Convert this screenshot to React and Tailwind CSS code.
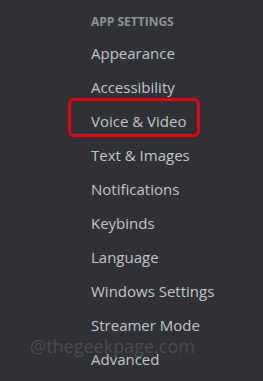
import React from "react";

const items = [
  "Appearance",
  "Accessibility",
  "Voice & Video",
  "Text & Images",
  "Notifications",
  "Keybinds",
  "Language",
  "Windows Settings",
  "Streamer Mode",
  "Advanced",
];

export default function App() {
  return (
    <div
      className="relative w-[263px] h-[381px] overflow-hidden bg-[#2f3136]"
      style={{ fontFamily: '"Open Sans", "Noto Sans", sans-serif' }}
    >
      <div className="pl-[91px] pt-[13px] flex flex-col">
        <div className="h-[18px] flex items-center text-[12px] font-bold text-[#8e9297]">
          APP SETTINGS
        </div>
        <div className="h-[5px]" />
        {items.map((label) => (
          <div
            key={label}
            className="relative h-[34px] flex items-center text-[15px] font-medium text-[#c4c6c9]"
          >
            {label}
            {label === "Voice & Video" && (
              <span className="absolute left-[-23px] top-[-6px] w-[132px] h-[39px] border-[3px] border-[#e3000f] rounded-[6px]" />
            )}
          </div>
        ))}
      </div>
      <div className="absolute left-[30px] top-[333px] text-[18px] text-[#4a4c51]">
        @thegeekpage.com
      </div>
    </div>
  );
}
